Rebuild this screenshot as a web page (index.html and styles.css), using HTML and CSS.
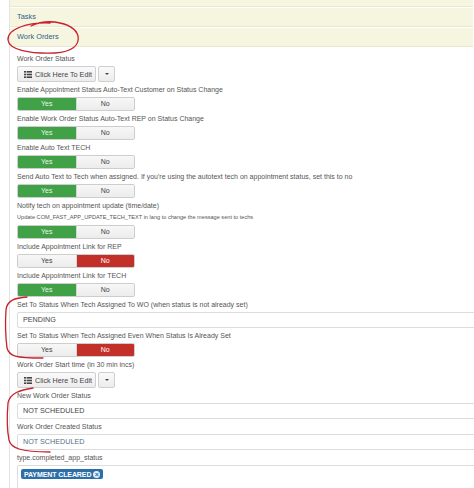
FILE: index.html
```html
<!DOCTYPE html>
<html lang="en">
<head>
  <meta charset="UTF-8">
  <title>Work Orders</title>
  <link rel="stylesheet" href="styles.css">
</head>
<body>
  <div class="panel">
    <div class="acc-strip"></div>
    <div class="acc-head">Tasks</div>
    <div class="acc-head">Work Orders</div>

    <div class="fields">
      <div class="field">
        <div class="label">Work Order Status</div>
        <div class="btn-group">
          <span class="btn btn-edit">
            <svg class="icon-list" width="8" height="7" viewBox="0 0 8 7"><rect x="0" y="0" width="2" height="1.6"/><rect x="2.6" y="0" width="5.4" height="1.6"/><rect x="0" y="2.7" width="2" height="1.6"/><rect x="2.6" y="2.7" width="5.4" height="1.6"/><rect x="0" y="5.4" width="2" height="1.6"/><rect x="2.6" y="5.4" width="5.4" height="1.6"/></svg>
            Click Here To Edit
          </span>
          <span class="btn btn-caret"><span class="caret"></span></span>
        </div>
      </div>

      <div class="field">
        <div class="label">Enable Appointment Status Auto-Text Customer on Status Change</div>
        <div class="toggle"><span class="opt yes on">Yes</span><span class="opt">No</span></div>
      </div>

      <div class="field">
        <div class="label">Enable Work Order Status Auto-Text REP on Status Change</div>
        <div class="toggle"><span class="opt yes on">Yes</span><span class="opt">No</span></div>
      </div>

      <div class="field">
        <div class="label">Enable Auto Text TECH</div>
        <div class="toggle"><span class="opt yes on">Yes</span><span class="opt">No</span></div>
      </div>

      <div class="field">
        <div class="label">Send Auto Text to Tech when assigned. If you're using the autotext tech on appointment status, set this to no</div>
        <div class="toggle"><span class="opt yes on">Yes</span><span class="opt">No</span></div>
      </div>

      <div class="field">
        <div class="label">Notify tech on appointment update (time/date)</div>
        <div class="help">Update COM_FAST_APP_UPDATE_TECH_TEXT in lang to change the message sent to techs</div>
        <div class="toggle"><span class="opt yes on">Yes</span><span class="opt">No</span></div>
      </div>

      <div class="field">
        <div class="label">Include Appointment Link for REP</div>
        <div class="toggle"><span class="opt">Yes</span><span class="opt no on">No</span></div>
      </div>

      <div class="field">
        <div class="label">Include Appointment Link for TECH</div>
        <div class="toggle"><span class="opt yes on">Yes</span><span class="opt">No</span></div>
      </div>

      <div class="field">
        <div class="label">Set To Status When Tech Assigned To WO (when status is not already set)</div>
        <div class="input">PENDING</div>
      </div>

      <div class="field">
        <div class="label">Set To Status When Tech Assigned Even When Status Is Already Set</div>
        <div class="toggle"><span class="opt">Yes</span><span class="opt no on">No</span></div>
      </div>

      <div class="field">
        <div class="label">Work Order Start time (in 30 min incs)</div>
        <div class="btn-group">
          <span class="btn btn-edit">
            <svg class="icon-list" width="8" height="7" viewBox="0 0 8 7"><rect x="0" y="0" width="2" height="1.6"/><rect x="2.6" y="0" width="5.4" height="1.6"/><rect x="0" y="2.7" width="2" height="1.6"/><rect x="2.6" y="2.7" width="5.4" height="1.6"/><rect x="0" y="5.4" width="2" height="1.6"/><rect x="2.6" y="5.4" width="5.4" height="1.6"/></svg>
            Click Here To Edit
          </span>
          <span class="btn btn-caret"><span class="caret"></span></span>
        </div>
      </div>

      <div class="field">
        <div class="label">New Work Order Status</div>
        <div class="input">NOT SCHEDULED</div>
      </div>

      <div class="field">
        <div class="label">Work Order Created Status</div>
        <div class="input input-muted">NOT SCHEDULED</div>
      </div>

      <div class="field">
        <div class="label">type.completed_app_status</div>
        <div class="input input-multi">
          <span class="tag">PAYMENT CLEARED <span class="tag-x">&times;</span></span>
        </div>
      </div>
    </div>
  </div>

  <!-- hand drawn red marks on top of the screenshot -->
  <svg class="marks" width="474" height="488" viewBox="0 0 474 488">
    <path d="M50 23 C28 22 7 29 8 40 C9 50 30 54 55 53 C72 52 80 45 78 36 C76 28 68 24 55 22 C45 21 37 23 31 26"/>
    <path d="M27 297 C15 298 7 300 6 310 C5 325 6 340 7 348 C9 356 15 358 43 358"/>
    <path d="M33 388 C20 390 10 393 8 403 C7 415 7 430 9 440 C11 448 20 452 50 452"/>
  </svg>
</body>
</html>
```

FILE: styles.css
```css
html, body {
  margin: 0;
  overflow: hidden;
}
body {
  font-family: "Liberation Sans", Arial, sans-serif;
  font-size: 7px;
  color: #555;
  background: #fff;
  width: 474px;
  height: 488px;
  position: relative;
}
.panel {
  margin-left: 9px;
  width: 463px;
  border-left: 1px solid #e4e4e4;
  height: 488px;
}
.acc-strip {
  height: 6px;
  background: #f7f6e0;
  border-bottom: 1px solid #e9e7d4;
}
.acc-head {
  height: 18px;
  line-height: 18px;
  margin-top: 1px;
  padding-left: 7px;
  background: #f6f5df;
  border-bottom: 1px solid #e9e7d4;
  color: #2d5f8a;
  font-size: 7.4px;
}
.fields {
  padding: 7px 0 0 7px;
}
.field {
  margin-bottom: 3px;
}
.label {
  line-height: 10px;
  margin-bottom: 2px;
  white-space: nowrap;
}
.help {
  font-size: 5.6px;
  line-height: 10px;
  margin: -1px 0 3px;
  white-space: nowrap;
}
.btn-group {
  display: flex;
  gap: 2px;
  height: 16px;
}
.btn {
  display: flex;
  align-items: center;
  box-sizing: border-box;
  height: 16px;
  border: 1px solid #cfcfcf;
  border-radius: 2px;
  background: linear-gradient(#fafafa, #ececec);
  color: #444;
}
.btn-edit {
  width: 79px;
  padding-left: 6px;
  gap: 3px;
  font-size: 7.2px;
}
.icon-list {
  fill: #444;
}
.btn-caret {
  width: 17px;
  justify-content: center;
}
.caret {
  width: 0;
  height: 0;
  border-left: 2px solid transparent;
  border-right: 2px solid transparent;
  border-top: 2px solid #444;
}
.toggle {
  display: flex;
  width: 118px;
  height: 14px;
  box-sizing: border-box;
  border: 1px solid #cdcdcd;
  border-radius: 2px;
  overflow: hidden;
}
.opt {
  flex: 1;
  text-align: center;
  line-height: 12px;
  background: linear-gradient(#f7f7f7, #ececec);
  color: #444;
}
.opt + .opt {
  border-left: 1px solid #d6d6d6;
}
.opt.yes.on {
  background: #41a146;
  color: #e8f5e8;
}
.opt.no.on {
  background: #c33029;
  color: #fff;
}
.input {
  box-sizing: border-box;
  width: 480px;
  height: 16px;
  line-height: 14px;
  padding-left: 5px;
  border: 1px solid #dcdcdc;
  border-radius: 2px;
  color: #444;
  font-size: 7.2px;
}
.input-muted {
  color: #56708a;
}
.input-multi {
  height: 40px;
  padding: 3px 0 0 3px;
  line-height: normal;
}
.tag {
  display: inline-flex;
  align-items: center;
  gap: 2px;
  height: 10px;
  padding: 0 3px;
  background: #2b6ea8;
  border-radius: 2px;
  color: #fff;
  font-size: 7px;
  font-weight: bold;
  letter-spacing: -0.1px;
}
.tag-x {
  display: inline-flex;
  align-items: center;
  justify-content: center;
  width: 7px;
  height: 7px;
  border-radius: 50%;
  background: #e6eef6;
  color: #2b6ea8;
  font-size: 7px;
  line-height: 7px;
}
.marks {
  position: absolute;
  left: 0;
  top: 0;
  pointer-events: none;
}
.marks path {
  fill: none;
  stroke: #c8232a;
  stroke-width: 1.3;
  stroke-linecap: round;
}
```
